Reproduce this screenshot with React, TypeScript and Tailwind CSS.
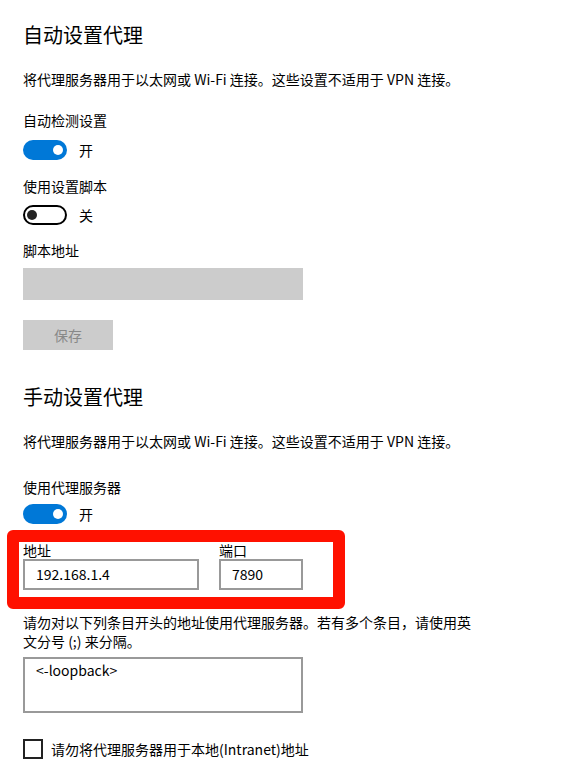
import React from "react";

const font = { fontFamily: "'Noto Sans CJK SC', 'Noto Sans', sans-serif" };

function Toggle({ on }: { on: boolean }) {
  return (
    <div className="flex items-center h-[20px] gap-[12px]">
      {on ? (
        <div className="w-[44px] h-[20px] rounded-full bg-[#0078d7] flex items-center justify-end pr-[4px]">
          <div className="w-[10px] h-[10px] rounded-full bg-white" />
        </div>
      ) : (
        <div className="w-[44px] h-[20px] rounded-full border-2 border-black flex items-center pl-[2px]">
          <div className="w-[10px] h-[10px] rounded-full bg-[#222]" />
        </div>
      )}
      <span className="text-[14px] leading-[20px]">{on ? "开" : "关"}</span>
    </div>
  );
}

export default function App() {
  return (
    <div
      className="w-[567px] h-[759px] overflow-hidden bg-white text-black pl-[23px] pt-[21px] flex flex-col items-start"
      style={font}
    >
      <h2 className="text-[20px] leading-[28px]">自动设置代理</h2>
      <p className="mt-[20px] text-[14px] leading-[20px]">
        将代理服务器用于以太网或 Wi-Fi 连接。这些设置不适用于 VPN 连接。
      </p>

      <p className="mt-[21px] text-[14px] leading-[20px]">自动检测设置</p>
      <div className="mt-[10px]">
        <Toggle on />
      </div>

      <p className="mt-[16px] text-[14px] leading-[20px]">使用设置脚本</p>
      <div className="mt-[9px]">
        <Toggle on={false} />
      </div>

      <p className="mt-[15px] text-[14px] leading-[20px]">脚本地址</p>
      <div className="mt-[8px] w-[280px] h-[32px] bg-[#cccccc]" />
      <button className="mt-[20px] w-[90px] h-[31px] bg-[#cccccc] text-[#888] text-[14px] leading-[20px]">
        保存
      </button>

      <h2 className="mt-[33px] text-[20px] leading-[28px]">手动设置代理</h2>
      <p className="mt-[20px] text-[14px] leading-[20px]">
        将代理服务器用于以太网或 Wi-Fi 连接。这些设置不适用于 VPN 连接。
      </p>

      <p className="mt-[26px] text-[14px] leading-[20px]">使用代理服务器</p>
      <div className="mt-[7px]">
        <Toggle on />
      </div>

      {/* annotation frame */}
      <div className="mt-[6px] -ml-[16px] w-[338px] border-[12px] border-[#ff1100] rounded-[6px] pl-[4px] pb-[7px] flex gap-[20px]">
        <div className="flex flex-col">
          <span className="text-[14px] leading-[16px]">地址</span>
          <div className="mt-[1px] w-[176px] h-[31px] border-2 border-[#999] flex items-center pl-[11px] text-[14px]">
            192.168.1.4
          </div>
        </div>
        <div className="flex flex-col">
          <span className="text-[14px] leading-[16px]">端口</span>
          <div className="mt-[1px] w-[84px] h-[31px] border-2 border-[#999] flex items-center pl-[11px] text-[14px]">
            7890
          </div>
        </div>
      </div>

      <p className="mt-[4px] w-[452px] text-[14px] leading-[19px]">
        请勿对以下列条目开头的地址使用代理服务器。若有多个条目，请使用英文分号 (;) 来分隔。
      </p>
      <div className="mt-[6px] w-[280px] h-[56px] border-2 border-[#999] pl-[11px] pt-[1px] text-[14px] leading-[20px]">
        &lt;-loopback&gt;
      </div>

      <label className="mt-[26px] flex items-center gap-[8px]">
        <span className="w-[20px] h-[20px] border-2 border-[#222]" />
        <span className="text-[14px] leading-[20px]">请勿将代理服务器用于本地(Intranet)地址</span>
      </label>
    </div>
  );
}
